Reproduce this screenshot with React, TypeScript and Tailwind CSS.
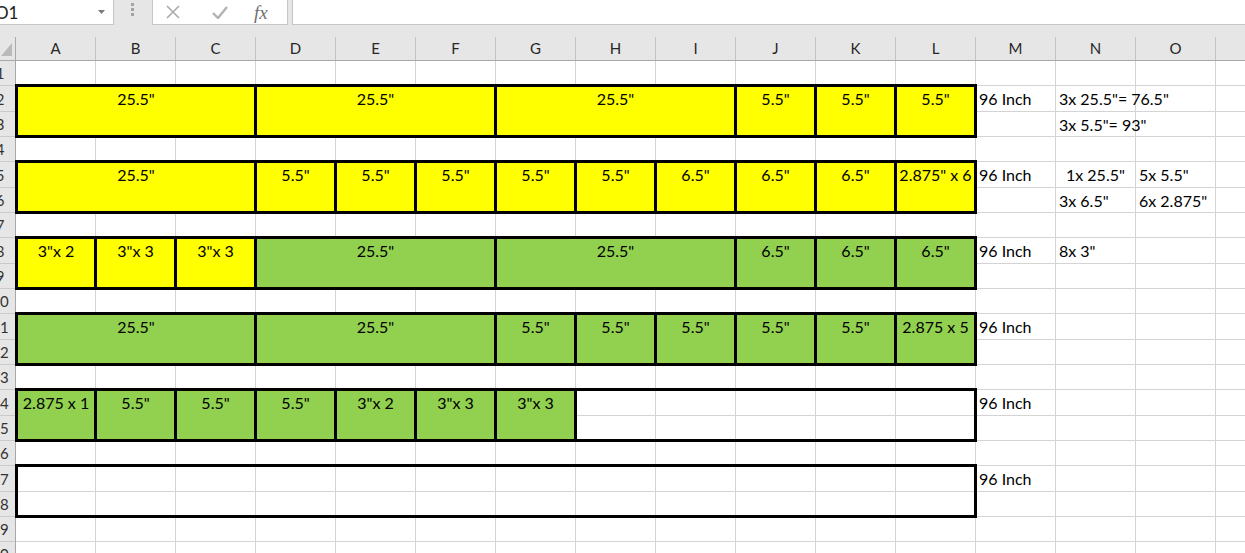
import React from 'react';

const COLS = ['A', 'B', 'C', 'D', 'E', 'F', 'G', 'H', 'I', 'J', 'K', 'L', 'M', 'N', 'O', 'P'];
const ROW_HEIGHTS = [25, 26, 25, 25, 26, 25, 25, 26, 25, 25, 26, 25, 25, 26, 25, 25, 26, 25, 25, 25];
const ROWS_TEMPLATE =
  'grid-rows-[25px_26px_25px_25px_26px_25px_25px_26px_25px_25px_26px_25px_25px_26px_25px_25px_26px_25px_25px_25px]';

const H: Record<number, string> = { 25: 'h-[25px] leading-[25px]', 26: 'h-[26px] leading-[26px]' };

const COL_START: Record<number, string> = {
  1: 'col-start-1', 2: 'col-start-2', 3: 'col-start-3', 4: 'col-start-4', 5: 'col-start-5',
  6: 'col-start-6', 7: 'col-start-7', 8: 'col-start-8', 9: 'col-start-9', 10: 'col-start-10',
  11: 'col-start-11', 12: 'col-start-12', 13: 'col-start-13', 14: 'col-start-14', 15: 'col-start-15',
};
const COL_SPAN: Record<number, string> = { 1: 'col-span-1', 3: 'col-span-3', 5: 'col-span-5', 12: 'col-span-12' };
const ROW_START: Record<number, string> = {
  2: 'row-start-2', 3: 'row-start-3', 5: 'row-start-5', 6: 'row-start-6', 8: 'row-start-8',
  11: 'row-start-11', 14: 'row-start-14', 17: 'row-start-17',
};
const FILL: Record<string, string> = { y: 'bg-[#ffff00]', g: 'bg-[#92d050]', w: '' };

// [start col, span, fill, label]
type Seg = [number, number, string, string];

const blocks: { row: number; segs: Seg[] }[] = [
  {
    row: 2,
    segs: [[1, 3, 'y', '25.5"'], [4, 3, 'y', '25.5"'], [7, 3, 'y', '25.5"'], [10, 1, 'y', '5.5"'], [11, 1, 'y', '5.5"'], [12, 1, 'y', '5.5"']],
  },
  {
    row: 5,
    segs: [
      [1, 3, 'y', '25.5"'], [4, 1, 'y', '5.5"'], [5, 1, 'y', '5.5"'], [6, 1, 'y', '5.5"'], [7, 1, 'y', '5.5"'],
      [8, 1, 'y', '5.5"'], [9, 1, 'y', '6.5"'], [10, 1, 'y', '6.5"'], [11, 1, 'y', '6.5"'], [12, 1, 'y', '2.875" x 6'],
    ],
  },
  {
    row: 8,
    segs: [
      [1, 1, 'y', '3"x 2'], [2, 1, 'y', '3"x 3'], [3, 1, 'y', '3"x 3'], [4, 3, 'g', '25.5"'], [7, 3, 'g', '25.5"'],
      [10, 1, 'g', '6.5"'], [11, 1, 'g', '6.5"'], [12, 1, 'g', '6.5"'],
    ],
  },
  {
    row: 11,
    segs: [
      [1, 3, 'g', '25.5"'], [4, 3, 'g', '25.5"'], [7, 1, 'g', '5.5"'], [8, 1, 'g', '5.5"'], [9, 1, 'g', '5.5"'],
      [10, 1, 'g', '5.5"'], [11, 1, 'g', '5.5"'], [12, 1, 'g', '2.875 x 5'],
    ],
  },
  {
    row: 14,
    segs: [
      [1, 1, 'g', '2.875 x 1'], [2, 1, 'g', '5.5"'], [3, 1, 'g', '5.5"'], [4, 1, 'g', '5.5"'], [5, 1, 'g', '3"x 2'],
      [6, 1, 'g', '3"x 3'], [7, 1, 'g', '3"x 3'], [8, 5, 'w', ''],
    ],
  },
  { row: 17, segs: [[1, 12, 'w', '']] },
];

// [col, row, text, extra padding]
const notes: [number, number, string, string?][] = [
  [13, 2, '96 Inch'],
  [14, 2, '3x 25.5"= 76.5"'],
  [14, 3, '3x 5.5"= 93"'],
  [13, 5, '96 Inch'],
  [14, 5, '1x 25.5"', 'pl-[10px]'],
  [15, 5, '5x 5.5"'],
  [14, 6, '3x 6.5"'],
  [15, 6, '6x 2.875"'],
  [13, 8, '96 Inch'],
  [14, 8, '8x 3"'],
  [13, 11, '96 Inch'],
  [13, 14, '96 Inch'],
  [13, 17, '96 Inch'],
];

function FormulaBar() {
  return (
    <div className="h-[37px] bg-[#e6e6e6] flex items-start">
      <div className="w-[114px] h-[25px] shrink-0 bg-white border-r border-b border-[#c6c6c6] flex items-center justify-between pr-[8px] overflow-hidden">
        <span className="-ml-[5px] text-[17px] leading-none text-[#222]">O1</span>
        <svg width="7" height="5" viewBox="0 0 7 5">
          <polygon points="0,0 7,0 3.5,4" fill="#7a7a7a" />
        </svg>
      </div>
      <div className="ml-[17px] mt-[3px] flex flex-col gap-[2px]">
        <div className="w-[3px] h-[3px] bg-[#a3a3a3]" />
        <div className="w-[3px] h-[3px] bg-[#a3a3a3]" />
        <div className="w-[3px] h-[3px] bg-[#a3a3a3]" />
      </div>
      <div className="ml-[18px] w-[136px] h-[25px] shrink-0 bg-white border-l border-r border-b border-[#c6c6c6] flex items-center">
        <svg className="ml-[12px]" width="16" height="14" viewBox="0 0 16 14">
          <path d="M2 1 L14 13 M14 1 L2 13" stroke="#ababab" strokeWidth="1.6" fill="none" />
        </svg>
        <svg className="ml-[31px]" width="16" height="13" viewBox="0 0 16 13">
          <path d="M1 7 L6 12 L15 1" stroke="#b3b3b3" strokeWidth="2.4" fill="none" />
        </svg>
        <span className="ml-[26px] font-['Liberation_Serif',serif] italic text-[19px] leading-none text-[#707070]">
          fx
        </span>
      </div>
      <div className="ml-[4px] flex-1 h-[25px] bg-white border-l border-b border-[#c6c6c6]" />
    </div>
  );
}

function ColumnHeaders() {
  return (
    <div className="flex h-[24px] bg-[#e6e6e6] border-b border-[#a8a8a8]">
      <div className="w-[16px] shrink-0 border-r border-[#a8a8a8] flex items-end justify-end pr-[3px] pb-[4px]">
        <svg width="11" height="13" viewBox="0 0 11 13">
          <polygon points="0,13 11,13 11,0" fill="#b9b9b9" />
        </svg>
      </div>
      {COLS.map((c) => (
        <div
          key={c}
          className="w-[80px] shrink-0 border-r border-[#c3c3c3] text-center text-[15px] leading-[23px] text-[#262626]"
        >
          {c}
        </div>
      ))}
    </div>
  );
}

function RowHeaders() {
  return (
    <div className="w-[16px] shrink-0 bg-[#e6e6e6] border-r border-[#a8a8a8]">
      {ROW_HEIGHTS.map((h, i) => (
        <div key={i} className={`${H[h]} border-b border-[#cacaca] overflow-hidden`}>
          <div className="w-[32px] -ml-[16px] text-center text-[15px] text-[#333]">{i + 1}</div>
        </div>
      ))}
    </div>
  );
}

function Sheet() {
  return (
    <div className="grid shrink-0">
      <div className={`col-start-1 row-start-1 grid grid-cols-[repeat(16,80px)] ${ROWS_TEMPLATE}`}>
        {ROW_HEIGHTS.map((_, r) =>
          COLS.map((c) => <div key={`${r}-${c}`} className="border-r border-b border-[#d4d4d4]" />)
        )}
      </div>
      <div className={`col-start-1 row-start-1 grid grid-cols-[repeat(16,80px)] ${ROWS_TEMPLATE}`}>
        {blocks.map((b) =>
          b.segs.map(([c, span, fill, label]) => (
            <div
              key={`${b.row}-${c}`}
              className={`${COL_START[c]} ${COL_SPAN[span]} ${ROW_START[b.row]} row-span-2 border-[3px] border-black -mt-[2px] -mb-[1px] -mr-[1px] ${
                c === 1 ? '-ml-[1px]' : '-ml-[2px]'
              } ${FILL[fill]}`}
            >
              <div className="pt-[1px] text-center text-[16px] leading-[22px] whitespace-nowrap">{label}</div>
            </div>
          ))
        )}
        {notes.map(([c, r, text, pad]) => (
          <div
            key={`${c}-${r}`}
            className={`${COL_START[c]} ${ROW_START[r]} ${pad ?? 'pl-[3px]'} pt-[2px] text-[16px] leading-[22px] whitespace-nowrap`}
          >
            {text}
          </div>
        ))}
      </div>
    </div>
  );
}

export default function App() {
  return (
    <div className="w-[1245px] h-[553px] overflow-hidden bg-white text-black font-[Lato,sans-serif]">
      <FormulaBar />
      <ColumnHeaders />
      <div className="flex">
        <RowHeaders />
        <Sheet />
      </div>
    </div>
  );
}
